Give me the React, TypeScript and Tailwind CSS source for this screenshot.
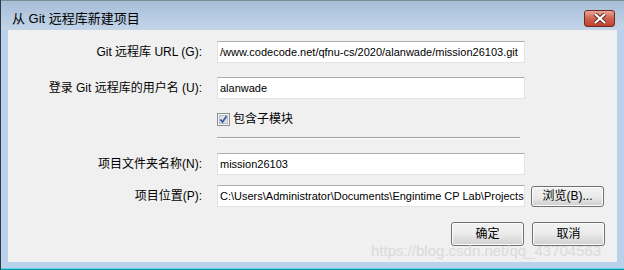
import React from "react";

const font = {
  fontFamily: '"Liberation Sans", "Noto Sans CJK SC", sans-serif',
};

const TextBox = ({ value, w = "w-[308px]" }: { value: string; w?: string }) => (
  <div
    className={`${w} h-[22px] bg-white border border-[#dfe4ea] border-t-[#abadb3] pl-[2px] flex items-center text-[11px] text-black whitespace-nowrap overflow-hidden`}
  >
    {value}
  </div>
);

const Label = ({ children }: { children: React.ReactNode }) => (
  <div className="w-[195px] text-right text-[12px] text-black pr-[1px] whitespace-nowrap">
    {children}
  </div>
);

const WinButton = ({ children, w = "w-[73px]", h = "h-[24px]" }: { children: React.ReactNode; w?: string; h?: string }) => (
  <button
    className={`${w} ${h} rounded-[3px] border border-[#707070] bg-gradient-to-b from-[#f2f2f2] via-[#ebebeb] to-[#cfcfcf] shadow-[inset_0_0_0_1px_#fcfcfc] text-[12px] text-black flex items-center justify-center`}
  >
    {children}
  </button>
);

const Checkbox = () => (
  <svg width="13" height="13" viewBox="0 0 13 13">
    <rect x="0.5" y="0.5" width="12" height="12" fill="#f4f4f4" stroke="#8e8f8f" />
    <rect x="2.5" y="2.5" width="8" height="8" fill="#dfe2e8" stroke="#b8bcc6" />
    <path d="M3.5 6.5 L5.5 9 L9.5 3.2" fill="none" stroke="#3c5a9a" strokeWidth="1.8" />
  </svg>
);

export default function App() {
  return (
    <div style={font} className="relative w-[624px] h-[270px] bg-[#b9d1ea] border-l border-[#2f3a44] flex flex-col overflow-hidden">
      {/* title bar */}
      <div className="h-[30px] flex items-start bg-gradient-to-b from-[#a7bed8] to-[#c3d5e9] border-t border-[#7d8b99]">
        <div className="pl-[11px] pt-[8px] text-[13px] text-black">从 Git 远程库新建项目</div>
        <div className="ml-auto mr-[9px] mt-[9px] w-[31px] h-[17px] rounded-[3px] border border-[#6e2a22] bg-gradient-to-b from-[#e8a597] via-[#d0614f] to-[#c2412e] flex items-center justify-center">
          <svg width="14" height="11" viewBox="0 0 14 11">
            <path d="M2 1 L12 10 M12 1 L2 10" stroke="#5a2a26" strokeWidth="4" />
            <path d="M2 1 L12 10 M12 1 L2 10" stroke="#ffffff" strokeWidth="2.2" />
          </svg>
        </div>
      </div>

      {/* client area */}
      <div className="ml-[7px] mr-[7px] h-[232px] bg-[#f0f0f0] pt-[11px] flex flex-col">
        <div className="flex items-center gap-[14px]">
          <Label>Git 远程库 URL (G):</Label>
          <TextBox value="/www.codecode.net/qfnu-cs/2020/alanwade/mission26103.git" />
        </div>
        <div className="flex items-center gap-[14px] mt-[14px]">
          <Label>登录 Git 远程库的用户名 (U):</Label>
          <TextBox value="alanwade" />
        </div>
        <div className="flex items-center mt-[12px] ml-[209px] gap-[3px] h-[16px]">
          <Checkbox />
          <span className="text-[12px] text-black">包含子模块</span>
        </div>
        <div className="ml-[209px] mt-[10px] w-[303px] h-[2px] border-t border-[#a0a0a0] border-b border-b-white" />
        <div className="flex items-center gap-[14px] mt-[14px]">
          <Label>项目文件夹名称(N):</Label>
          <TextBox value="mission26103" />
        </div>
        <div className="flex items-center gap-[14px] mt-[10px]">
          <Label>项目位置(P):</Label>
          <div className="flex items-center gap-[6px]">
            <TextBox value="C:\Users\Administrator\Documents\Engintime CP Lab\Projects" />
            <WinButton h="h-[21px]">浏览(B)...</WinButton>
          </div>
        </div>
        <div className="flex justify-end gap-[8px] mt-[15px] mr-[12px]">
          <WinButton>确定</WinButton>
          <WinButton>取消</WinButton>
        </div>
      </div>
      <div className="flex-1 border-b border-[#1e8fa8] shadow-[inset_0_-1px_0_#5fd9ee]" />

      {/* watermark */}
      <div className="absolute left-[370px] top-[240px] text-[15px] text-[#d6d6d6] opacity-80 pointer-events-none whitespace-nowrap">
        https://blog.csdn.net/qq_43704563
      </div>
    </div>
  );
}
